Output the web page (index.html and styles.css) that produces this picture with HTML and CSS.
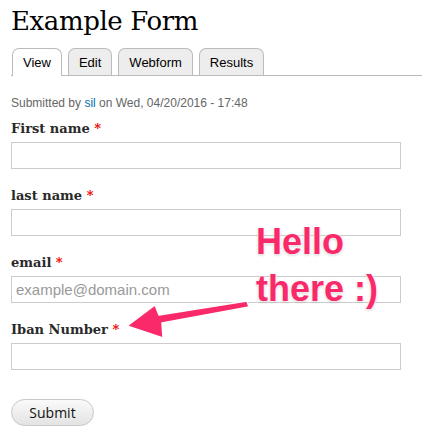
FILE: index.html
```html
<!DOCTYPE html>
<html>
<head>
<meta charset="utf-8">
<link rel="stylesheet" href="styles.css">
</head>
<body>
<div class="page">
  <h1 class="title">Example Form</h1>
  <ul class="tabs">
    <li class="tab active">View</li>
    <li class="tab">Edit</li>
    <li class="tab">Webform</li>
    <li class="tab">Results</li>
  </ul>
  <p class="submitted">Submitted by <a class="user">sil</a> on Wed, 04/20/2016 - 17:48</p>
  <form class="form">
    <div class="field">
      <label class="label">First name <span class="req">*</span></label>
      <input class="input" type="text">
    </div>
    <div class="field">
      <label class="label">last name <span class="req">*</span></label>
      <input class="input" type="text">
    </div>
    <div class="field">
      <label class="label">email <span class="req">*</span></label>
      <input class="input" type="text" placeholder="example@domain.com">
    </div>
    <div class="field">
      <label class="label">Iban Number <span class="req">*</span></label>
      <input class="input" type="text">
    </div>
    <button class="submit" type="button">Submit</button>
  </form>
  <div class="note">Hello<br>there :)</div>
  <svg class="arrow" width="422" height="438" viewBox="0 0 422 438">
    <path d="M247 301 L249 307 L162 323 L163 338 L127 326 L155 305 L159 315 Z" fill="#fa2a6a" stroke="#fff" stroke-width="1.5" stroke-linejoin="round"/>
  </svg>
</div>
</body>
</html>
```

FILE: styles.css
```css
html, body {
  margin: 0;
  padding: 0;
  background: #fff;
}
.page {
  position: relative;
  width: 422px;
  height: 438px;
  overflow: hidden;
  padding: 0 21px 0 11px;
  box-sizing: border-box;
}
.title {
  margin: 0;
  padding-top: 5px;
  font-family: "DejaVu Serif", serif;
  font-weight: normal;
  font-size: 26px;
  line-height: 32px;
  letter-spacing: -0.4px;
  color: #000;
}
.tabs {
  list-style: none;
  margin: 11px -21px 0 0;
  padding: 0 0 0 1px;
  display: flex;
  gap: 6px;
  border-bottom: 1px solid #bbb;
  height: 27px;
  align-items: flex-end;
}
.tab {
  font-family: "Liberation Sans", Arial, sans-serif;
  font-size: 13px;
  color: #000;
  height: 27px;
  box-sizing: border-box;
  padding: 6px 10px 0;
  border: 1px solid #bbb;
  border-bottom: none;
  border-radius: 7px 7px 0 0;
  background: #ededed;
}
.tab.active {
  background: #fff;
  height: 28px;
  margin-bottom: -1px;
}
.submitted {
  margin: 20px 0 0;
  font-family: "Liberation Sans", Arial, sans-serif;
  font-size: 12px;
  line-height: 14px;
  color: #666;
}
.user {
  color: #0071b3;
}
.form {
  display: flex;
  flex-direction: column;
  margin-top: 11px;
}
.field {
  display: flex;
  flex-direction: column;
  height: 67px;
}
.label {
  font-family: "DejaVu Serif", serif;
  font-weight: bold;
  font-size: 13px;
  line-height: 16px;
  color: #2a2a2a;
  height: 21px;
}
.req {
  color: #e00;
}
.input {
  width: 390px;
  height: 27px;
  box-sizing: border-box;
  margin: 0;
  border: 1px solid #ccc;
  padding: 2px 4px;
  font-family: "Liberation Sans", Arial, sans-serif;
  font-size: 15px;
  color: #333;
  outline: none;
}
.input::placeholder {
  color: #999;
}
.submit {
  margin-top: 10px;
  align-self: flex-start;
  width: 83px;
  height: 27px;
  border: 1px solid #c8c8c8;
  border-radius: 14px;
  background: linear-gradient(#fafafa, #e3e3e3);
  font-family: "Open Sans", "Liberation Sans", sans-serif;
  font-size: 14px;
  color: #111;
  padding: 0;
}
.note {
  position: absolute;
  left: 256px;
  top: 218px;
  font-family: "Liberation Sans", Arial, sans-serif;
  font-weight: bold;
  font-size: 36px;
  line-height: 47px;
  color: #fa2a6a;
  text-shadow: 0 0 2px #fff, 0 0 2px #fff, 0 1px 3px rgba(0,0,0,0.25);
}
.arrow {
  position: absolute;
  left: 0;
  top: 0;
  pointer-events: none;
}
```
